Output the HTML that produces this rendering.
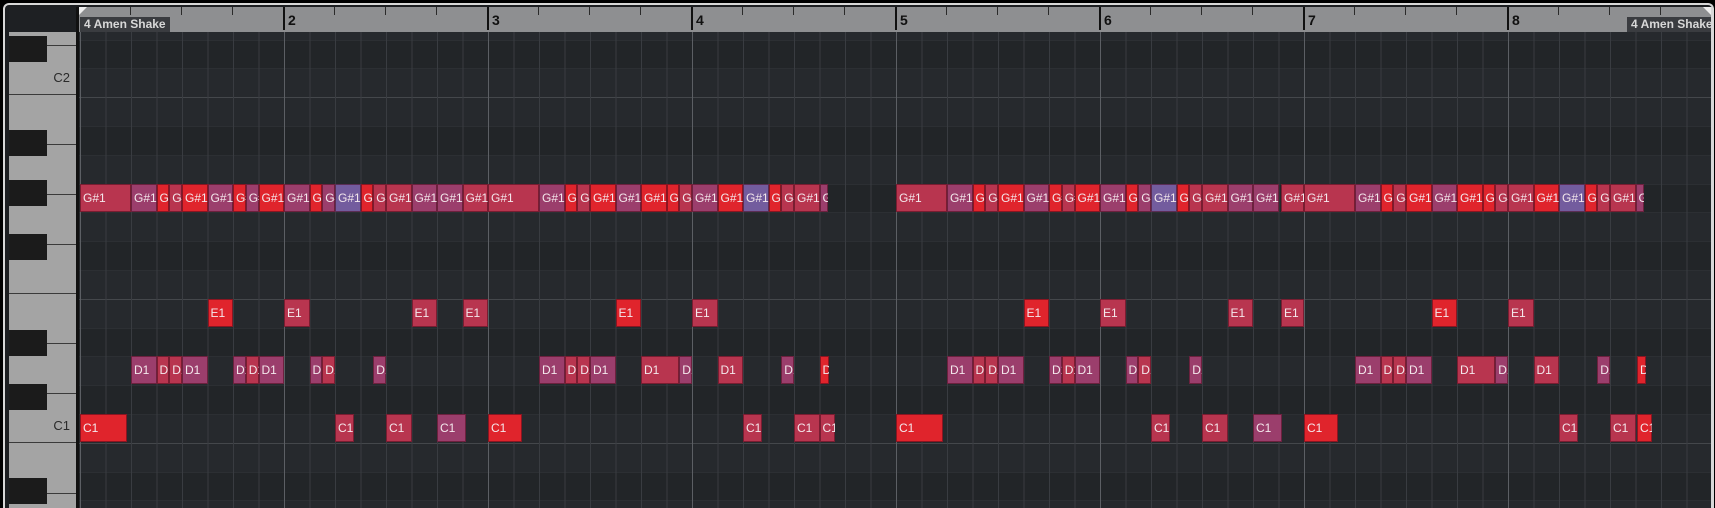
<!DOCTYPE html>
<html><head><meta charset="utf-8"><style>
*{margin:0;padding:0;box-sizing:border-box}
html,body{width:1715px;height:508px;overflow:hidden}
body{background:#000;position:relative;font-family:"Liberation Sans",sans-serif}
.frame{position:absolute;left:3px;top:3px;width:1711px;height:505px;border:2px solid #d8d8d8;border-bottom:none;border-radius:6px 6px 0 0;background:#1c1e21}
.kb{position:absolute;left:9px;top:32px;width:67px;height:476px;background:#a4a4a4}
.kh{position:absolute;left:9px;top:7px;width:67px;height:25px;background:#1e2023}
.bk{position:absolute;left:9px;width:38px;height:26px;background:#1b1b1b}
.tl{position:absolute;left:47px;width:29px;height:1px;background:#3a3a3a}
.tl.f{left:9px;width:67px}
.kl{position:absolute;right:1645px;font-size:13px;color:#2a2a2a}
.grid{position:absolute;left:0;top:0;width:1715px;height:508px;clip-path:inset(32px 4px 0 79px)}
.row{position:absolute;left:79px;width:1636px;height:28.8px;border-top:1px solid #2c2f33}
.w{background:#26292d}.b{background:#222528}
.row.t{border-top-color:#44474b}
.vl{position:absolute;left:80px;top:32px;width:1640px;height:476px;background:repeating-linear-gradient(90deg,#393c41 0 1px,transparent 1px 25.5px)}
.bl{position:absolute;left:80px;top:32px;width:1640px;height:476px;background:repeating-linear-gradient(90deg,#5c5f64 0 1px,transparent 1px 204px)}
i{position:absolute;font-style:normal;height:28px;line-height:28px;font-size:12px;color:#f4e8ec;padding-left:3px;overflow:hidden;white-space:nowrap;box-shadow:inset 0 0 0 1px rgba(70,10,25,.55)}
.g{top:183.6px}.e{top:298.8px}.d{top:356.4px}.c{top:414px}
.R{background:#e0242c}.P{background:#b8354f}.M{background:#9b3e6c}.V{background:#735c9e}
.ruler{position:absolute;left:79px;top:7px;width:1632px;height:25px;background:#8e8f91;overflow:hidden}
.tk{position:absolute;top:0;width:1px;height:8px;background:#2a2a2a}
.bar{position:absolute;top:0;width:2px;height:23px;background:#111}
.bn{position:absolute;top:5px;font-size:14px;font-weight:bold;color:#111}
.reg{position:absolute;top:10px;height:15px;background:#3a3c40;color:#d8d8d8;font-size:12px;font-weight:bold;line-height:15px;padding:0 4px;white-space:nowrap}
</style></head><body>
<div class="frame"></div>
<div class="kh"></div>
<div class="kb"></div>
<div class="bk" style="top:36px"></div><div class="bk" style="top:130px"></div><div class="bk" style="top:180px"></div><div class="bk" style="top:234px"></div><div class="bk" style="top:330px"></div><div class="bk" style="top:384px"></div><div class="bk" style="top:478px"></div>
<div class="tl" style="top:45px"></div><div class="tl" style="top:144px"></div><div class="tl" style="top:194px"></div><div class="tl" style="top:244px"></div><div class="tl" style="top:343px"></div><div class="tl" style="top:393px"></div><div class="tl" style="top:493px"></div>
<div class="tl f" style="top:94px"></div><div class="tl f" style="top:293px"></div><div class="tl f" style="top:442px"></div>
<div class="kl" style="top:70px">C2</div><div class="kl" style="top:418px">C1</div>
<div style="position:absolute;left:76px;top:7px;width:3px;height:501px;background:#111"></div>

<div class="grid">
<div class="row w" style="top:10.8px"></div>
<div class="row b" style="top:39.6px"></div>
<div class="row w" style="top:68.4px"></div>
<div class="row w t" style="top:97.2px"></div>
<div class="row b" style="top:126px"></div>
<div class="row w" style="top:154.8px"></div>
<div class="row b" style="top:183.6px"></div>
<div class="row w" style="top:212.4px"></div>
<div class="row b" style="top:241.2px"></div>
<div class="row w" style="top:270px"></div>
<div class="row w t" style="top:298.8px"></div>
<div class="row b" style="top:327.6px"></div>
<div class="row w" style="top:356.4px"></div>
<div class="row b" style="top:385.2px"></div>
<div class="row w" style="top:414px"></div>
<div class="row w t" style="top:442.8px"></div>
<div class="row b" style="top:471.6px"></div>
<div class="row w" style="top:500.4px"></div>
<div class="vl"></div><div class="bl"></div>

<i class="g P" style="left:80px;width:51px">G#1</i>
<i class="g M" style="left:131px;width:25.5px">G#1</i>
<i class="g R" style="left:156.5px;width:12.75px">G#1</i>
<i class="g P" style="left:169.25px;width:12.75px">G#1</i>
<i class="g R" style="left:182px;width:25.5px">G#1</i>
<i class="g M" style="left:207.5px;width:25.5px">G#1</i>
<i class="g R" style="left:233px;width:12.75px">G#1</i>
<i class="g M" style="left:245.75px;width:12.75px">G#1</i>
<i class="g R" style="left:258.5px;width:25.5px">G#1</i>
<i class="g M" style="left:284px;width:25.5px">G#1</i>
<i class="g R" style="left:309.5px;width:12.75px">G#1</i>
<i class="g M" style="left:322.25px;width:12.75px">G#1</i>
<i class="g V" style="left:335px;width:25.5px">G#1</i>
<i class="g R" style="left:360.5px;width:12.75px">G#1</i>
<i class="g P" style="left:373.25px;width:12.75px">G#1</i>
<i class="g P" style="left:386px;width:25.5px">G#1</i>
<i class="g M" style="left:411.5px;width:25.5px">G#1</i>
<i class="g M" style="left:437px;width:25.5px">G#1</i>
<i class="g P" style="left:462.5px;width:25.5px">G#1</i>
<i class="g P" style="left:488px;width:51px">G#1</i>
<i class="g M" style="left:539px;width:25.5px">G#1</i>
<i class="g R" style="left:564.5px;width:12.75px">G#1</i>
<i class="g P" style="left:577.25px;width:12.75px">G#1</i>
<i class="g R" style="left:590px;width:25.5px">G#1</i>
<i class="g M" style="left:615.5px;width:25.5px">G#1</i>
<i class="g R" style="left:641px;width:25.5px">G#1</i>
<i class="g R" style="left:666.5px;width:12.75px">G#1</i>
<i class="g P" style="left:679.25px;width:12.75px">G#1</i>
<i class="g M" style="left:692px;width:25.5px">G#1</i>
<i class="g R" style="left:717.5px;width:25.5px">G#1</i>
<i class="g V" style="left:743px;width:25.5px">G#1</i>
<i class="g R" style="left:768.5px;width:12.75px">G#1</i>
<i class="g P" style="left:781.25px;width:12.75px">G#1</i>
<i class="g P" style="left:794px;width:25.5px">G#1</i>
<i class="g M" style="left:819.5px;width:8px">G#1</i>

<i class="g P" style="left:896px;width:51px">G#1</i>
<i class="g M" style="left:947px;width:25.5px">G#1</i>
<i class="g R" style="left:972.5px;width:12.75px">G#1</i>
<i class="g P" style="left:985.25px;width:12.75px">G#1</i>
<i class="g R" style="left:998px;width:25.5px">G#1</i>
<i class="g M" style="left:1023.5px;width:25.5px">G#1</i>
<i class="g R" style="left:1049px;width:12.75px">G#1</i>
<i class="g P" style="left:1061.75px;width:12.75px">G#1</i>
<i class="g R" style="left:1074.5px;width:25.5px">G#1</i>
<i class="g M" style="left:1100px;width:25.5px">G#1</i>
<i class="g R" style="left:1125.5px;width:12.75px">G#1</i>
<i class="g M" style="left:1138.25px;width:12.75px">G#1</i>
<i class="g V" style="left:1151px;width:25.5px">G#1</i>
<i class="g R" style="left:1176.5px;width:12.75px">G#1</i>
<i class="g P" style="left:1189.25px;width:12.75px">G#1</i>
<i class="g P" style="left:1202px;width:25.5px">G#1</i>
<i class="g M" style="left:1227.5px;width:25.5px">G#1</i>
<i class="g M" style="left:1253px;width:25.5px">G#1</i>
<i class="g P" style="left:1281px;width:23px">G#1</i>
<i class="g P" style="left:1304px;width:51px">G#1</i>
<i class="g M" style="left:1355px;width:25.5px">G#1</i>
<i class="g R" style="left:1380.5px;width:12.75px">G#1</i>
<i class="g P" style="left:1393.25px;width:12.75px">G#1</i>
<i class="g R" style="left:1406px;width:25.5px">G#1</i>
<i class="g M" style="left:1431.5px;width:25.5px">G#1</i>
<i class="g R" style="left:1457px;width:25.5px">G#1</i>
<i class="g R" style="left:1482.5px;width:12.75px">G#1</i>
<i class="g P" style="left:1495.25px;width:12.75px">G#1</i>
<i class="g P" style="left:1508px;width:25.5px">G#1</i>
<i class="g R" style="left:1533.5px;width:25.5px">G#1</i>
<i class="g V" style="left:1559px;width:25.5px">G#1</i>
<i class="g R" style="left:1584.5px;width:12.75px">G#1</i>
<i class="g P" style="left:1597.25px;width:12.75px">G#1</i>
<i class="g P" style="left:1610px;width:25.5px">G#1</i>
<i class="g M" style="left:1635.5px;width:8px">G#1</i>

<i class="e R" style="left:207.5px;width:25.5px">E1</i>
<i class="e P" style="left:284px;width:25.5px">E1</i>
<i class="e P" style="left:411.5px;width:25.5px">E1</i>
<i class="e P" style="left:462.5px;width:25.5px">E1</i>
<i class="e R" style="left:615.5px;width:25.5px">E1</i>
<i class="e P" style="left:692px;width:25.5px">E1</i>
<i class="e R" style="left:1023.5px;width:25.5px">E1</i>
<i class="e P" style="left:1100px;width:25.5px">E1</i>
<i class="e P" style="left:1227.5px;width:25.5px">E1</i>
<i class="e P" style="left:1281px;width:23px">E1</i>
<i class="e R" style="left:1431.5px;width:25.5px">E1</i>
<i class="e P" style="left:1508px;width:25.5px">E1</i>

<i class="d M" style="left:131px;width:25.5px">D1</i>
<i class="d P" style="left:156.5px;width:12.75px">D1</i>
<i class="d P" style="left:169.25px;width:12.75px">D1</i>
<i class="d M" style="left:182px;width:25.5px">D1</i>
<i class="d M" style="left:233px;width:12.75px">D1</i>
<i class="d P" style="left:245.75px;width:12.75px">D1</i>
<i class="d M" style="left:258.5px;width:25.5px">D1</i>
<i class="d M" style="left:309.5px;width:12.75px">D1</i>
<i class="d P" style="left:322.25px;width:12.75px">D1</i>
<i class="d M" style="left:373.25px;width:12.75px">D1</i>
<i class="d M" style="left:539px;width:25.5px">D1</i>
<i class="d P" style="left:564.5px;width:12.75px">D1</i>
<i class="d P" style="left:577.25px;width:12.75px">D1</i>
<i class="d M" style="left:590px;width:25.5px">D1</i>
<i class="d P" style="left:641px;width:38.25px">D1</i>
<i class="d M" style="left:679.25px;width:12.75px">D1</i>
<i class="d P" style="left:717.5px;width:25.5px">D1</i>
<i class="d M" style="left:781.25px;width:12.75px">D1</i>
<i class="d R" style="left:819.5px;width:9px">D1</i>
<i class="d M" style="left:947px;width:25.5px">D1</i>
<i class="d P" style="left:972.5px;width:12.75px">D1</i>
<i class="d P" style="left:985.25px;width:12.75px">D1</i>
<i class="d M" style="left:998px;width:25.5px">D1</i>
<i class="d M" style="left:1049px;width:12.75px">D1</i>
<i class="d P" style="left:1061.75px;width:12.75px">D1</i>
<i class="d M" style="left:1074.5px;width:25.5px">D1</i>
<i class="d M" style="left:1125.5px;width:12.75px">D1</i>
<i class="d P" style="left:1138.25px;width:12.75px">D1</i>
<i class="d M" style="left:1189.25px;width:12.75px">D1</i>
<i class="d M" style="left:1355px;width:25.5px">D1</i>
<i class="d P" style="left:1380.5px;width:12.75px">D1</i>
<i class="d P" style="left:1393.25px;width:12.75px">D1</i>
<i class="d M" style="left:1406px;width:25.5px">D1</i>
<i class="d P" style="left:1457px;width:38.25px">D1</i>
<i class="d M" style="left:1495.25px;width:12.75px">D1</i>
<i class="d P" style="left:1533.5px;width:25.5px">D1</i>
<i class="d M" style="left:1597.25px;width:12.75px">D1</i>
<i class="d R" style="left:1637px;width:9px">D1</i>

<i class="c R" style="left:80px;width:47px">C1</i>
<i class="c P" style="left:335px;width:19px">C1</i>
<i class="c P" style="left:386px;width:25.5px">C1</i>
<i class="c M" style="left:437px;width:29px">C1</i>
<i class="c R" style="left:488px;width:34px">C1</i>
<i class="c P" style="left:743px;width:19px">C1</i>
<i class="c P" style="left:794px;width:25.5px">C1</i>
<i class="c P" style="left:819.5px;width:15px">C1</i>
<i class="c R" style="left:896px;width:47px">C1</i>
<i class="c P" style="left:1151px;width:19px">C1</i>
<i class="c P" style="left:1202px;width:25.5px">C1</i>
<i class="c M" style="left:1253px;width:29px">C1</i>
<i class="c R" style="left:1304px;width:34px">C1</i>
<i class="c P" style="left:1559px;width:19px">C1</i>
<i class="c P" style="left:1610px;width:25.5px">C1</i>
<i class="c R" style="left:1637px;width:15px">C1</i>
</div>

<div class="ruler">
<div class="tk" style="left:51px"></div><div class="tk" style="left:102px"></div><div class="tk" style="left:153px"></div>
<div class="bar" style="left:204px"></div><div class="bn" style="left:209px">2</div>
<div class="tk" style="left:255px"></div><div class="tk" style="left:306px"></div><div class="tk" style="left:357px"></div>
<div class="bar" style="left:408px"></div><div class="bn" style="left:413px">3</div>
<div class="tk" style="left:459px"></div><div class="tk" style="left:510px"></div><div class="tk" style="left:561px"></div>
<div class="bar" style="left:612px"></div><div class="bn" style="left:617px">4</div>
<div class="tk" style="left:663px"></div><div class="tk" style="left:714px"></div><div class="tk" style="left:765px"></div>
<div class="bar" style="left:816px"></div><div class="bn" style="left:821px">5</div>
<div class="tk" style="left:867px"></div><div class="tk" style="left:918px"></div><div class="tk" style="left:969px"></div>
<div class="bar" style="left:1020px"></div><div class="bn" style="left:1025px">6</div>
<div class="tk" style="left:1071px"></div><div class="tk" style="left:1122px"></div><div class="tk" style="left:1173px"></div>
<div class="bar" style="left:1224px"></div><div class="bn" style="left:1229px">7</div>
<div class="tk" style="left:1275px"></div><div class="tk" style="left:1326px"></div><div class="tk" style="left:1377px"></div>
<div class="bar" style="left:1428px"></div><div class="bn" style="left:1433px">8</div>
<div class="tk" style="left:1479px"></div><div class="tk" style="left:1530px"></div><div class="tk" style="left:1581px"></div>
<div class="reg" style="left:1px">4 Amen Shake</div>
<div class="reg" style="left:1548px;width:84px">4 Amen Shake</div>
<div style="position:absolute;left:0;top:0;width:0;height:0;border-top:8px solid #eee;border-right:8px solid transparent"></div>
<div style="position:absolute;right:0;top:0;width:0;height:0;border-top:8px solid #eee;border-left:8px solid transparent"></div>
</div>
<div style="position:absolute;left:1711px;top:7px;width:2px;height:501px;background:#d8d8d8"></div>
</body></html>
